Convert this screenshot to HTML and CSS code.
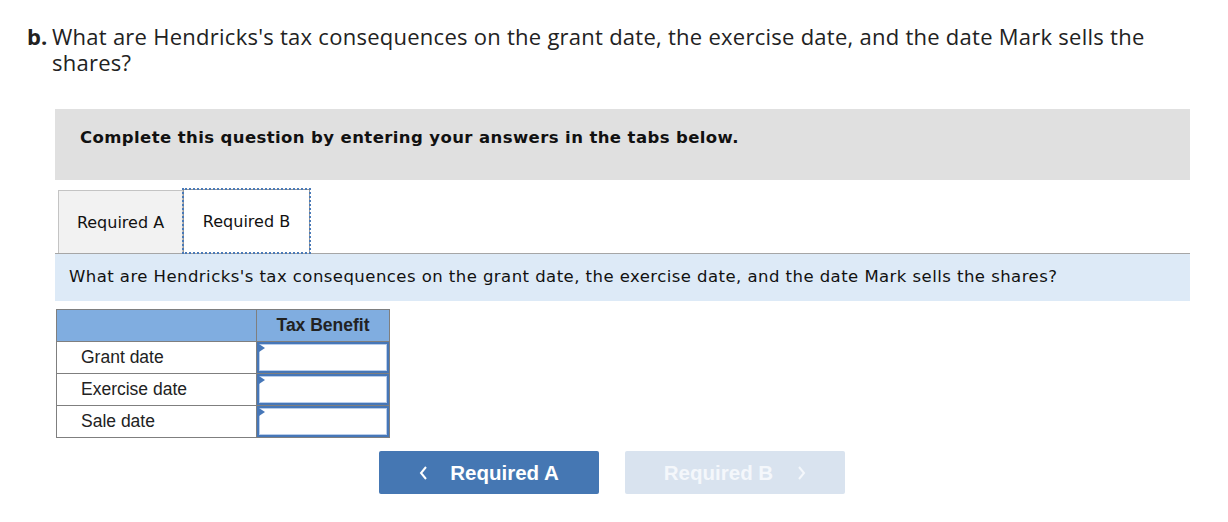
FILE: index.html
```html
<!DOCTYPE html>
<html>
<head>
<meta charset="utf-8">
<link rel="stylesheet" href="styles.css">
</head>
<body>
<div class="page">
  <div class="question">
    <span class="qlabel">b.</span>
    <span class="qtext">What are Hendricks's tax consequences on the grant date, the exercise date, and the date Mark sells the shares?</span>
  </div>
  <div class="panel">
    <div class="instr">Complete this question by entering your answers in the tabs below.</div>
    <div class="tabs">
      <div class="tab tab-a">Required A</div>
      <div class="tab tab-b">Required B</div>
    </div>
    <div class="prompt">What are Hendricks's tax consequences on the grant date, the exercise date, and the date Mark sells the shares?</div>
    <table class="grid">
      <tr class="head"><th class="c1"></th><th class="c2">Tax Benefit</th></tr>
      <tr><td class="c1">Grant date</td><td class="c2 inp"><div class="box"><span class="tri"></span></div></td></tr>
      <tr><td class="c1">Exercise date</td><td class="c2 inp"><div class="box"><span class="tri"></span></div></td></tr>
      <tr><td class="c1">Sale date</td><td class="c2 inp"><div class="box"><span class="tri"></span></div></td></tr>
    </table>
    <div class="nav">
      <div class="btn prev"><svg class="chev" width="9" height="14" viewBox="0 0 9 14"><polyline points="7,1 2,7 7,13" fill="none" stroke="#fff" stroke-width="2"/></svg>Required A</div>
      <div class="btn next">Required B<svg class="chev" width="9" height="14" viewBox="0 0 9 14"><polyline points="2,1 7,7 2,13" fill="none" stroke="#f4f7fb" stroke-width="2"/></svg></div>
    </div>
  </div>
</div>
</body>
</html>
```

FILE: styles.css
```css
html, body { margin: 0; padding: 0; background: #fff; }
.page { padding: 23px 0 0 27px; width: 1163px; }
.question {
  display: flex;
  font-family: "Open Sans", "Liberation Sans", sans-serif;
  font-size: 22px;
  letter-spacing: 0.26px;
  line-height: 26px;
  color: #222;
}
.qlabel { font-weight: bold; width: 25px; flex: none; letter-spacing: 0; }
.qtext { flex: 1; padding-right: 30px; }
.panel { margin: 34px 0 0 28px; width: 1135px; }
.instr {
  background: #e0e0e0;
  height: 71px;
  box-sizing: border-box;
  padding: 19px 0 0 25px;
  font-family: Verdana, "DejaVu Sans", sans-serif;
  font-weight: bold;
  font-size: 16.5px;
  letter-spacing: 0.4px;
  color: #111;
}
.tabs {
  display: flex;
  margin-top: 10px;
  padding-left: 3px;
  border-bottom: 1px solid #a6a6a6;
  height: 63px;
}
.tab {
  font-family: Verdana, "DejaVu Sans", sans-serif;
  font-size: 16px;
  color: #111;
  display: flex;
  align-items: center;
  justify-content: center;
  box-sizing: border-box;
}
.tab-a {
  width: 125px;
  background: #f2f2f2;
  border: 1px solid #c4c4c4;
  border-bottom: none;
}
.tab-b {
  width: 127px;
  background: #fff;
  border: 1px solid #999;
  border-bottom: none;
  outline: 2px dotted #4a7ab8;
  outline-offset: -1px;
  height: 64px;
  margin-top: -1px;
}
.prompt {
  background: #ddeaf7;
  height: 47px;
  box-sizing: border-box;
  padding: 13px 0 0 14px;
  font-family: Verdana, "DejaVu Sans", sans-serif;
  font-size: 16.5px;
  letter-spacing: 0.45px;
  color: #111;
}
.grid {
  margin: 8px 0 0 1px;
  border-collapse: collapse;
  font-family: "Liberation Sans", Arial, sans-serif;
  font-size: 17.5px;
  color: #222;
}
.grid th, .grid td {
  border: 1px solid #7f7f7f;
  padding: 0;
  height: 31px;
}
.grid .head th { background: #80ade0; height: 31px; font-weight: bold; }
.grid .c1 { width: 200px; text-align: left; padding-left: 24px; box-sizing: border-box; }
.grid th.c1 { padding: 0; }
.grid .c2 { width: 132px; }
.grid td.inp { padding: 0; }
.box {
  height: 31px;
  box-sizing: border-box;
  border: 2px solid #4677b8;
  box-shadow: inset 0 0 0 1px #b9cdea;
  background: #fff;
  position: relative;
}
.tri {
  position: absolute;
  left: 0;
  top: 0;
  width: 0; height: 0;
  border-top: 4px solid transparent;
  border-bottom: 4px solid transparent;
  border-left: 6px solid #4677b8;
}
.nav {
  display: flex;
  gap: 26px;
  margin: 13px 0 0 324px;
}
.btn {
  width: 220px;
  height: 43px;
  border-radius: 2px;
  display: flex;
  align-items: center;
  justify-content: center;
  font-family: "Liberation Sans", Arial, sans-serif;
  font-weight: bold;
  font-size: 20.5px;
  color: #fff;
  box-sizing: border-box;
}
.prev { background: #4577b3; }
.next { background: #d9e3ef; color: #f4f7fb; }
.prev .chev { margin-right: 22px; }
.next .chev { margin-left: 24px; }
```
